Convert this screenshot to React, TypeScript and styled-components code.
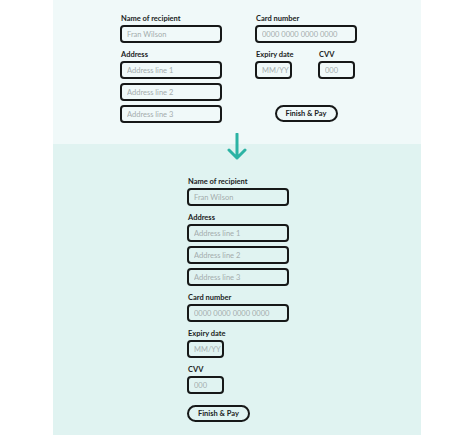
import React from "react";
import styled, { createGlobalStyle } from "styled-components";

const GlobalStyle = createGlobalStyle`
  html, body {
    margin: 0;
    padding: 0;
    background: #ffffff;
    font-family: "Lato", "Liberation Sans", sans-serif;
  }
`;

interface FieldProps {
  label: string;
  placeholders: string[];
  width?: number;
}

/**
 * Label with one or more stacked inputs
 */
const Field = (props: FieldProps) => {
  return (
    <StyledField>
      <StyledLabel>{props.label}</StyledLabel>
      <StyledInputStack>
        {props.placeholders.map((p) => (
          <StyledInput key={p} placeholder={p} $width={props.width} readOnly />
        ))}
      </StyledInputStack>
    </StyledField>
  );
};

const ArrowDown = () => (
  <StyledArrow width="20" height="28" viewBox="0 0 20 28">
    <path
      d="M10 1 V25 M2 17 L10 25 L18 17"
      fill="none"
      stroke="#2cb3a4"
      strokeWidth="3"
      strokeLinecap="round"
      strokeLinejoin="round"
    />
  </StyledArrow>
);

const App = () => {
  return (
    <>
      <GlobalStyle />
      <StyledPanel>
        {/* Start wide layout */}
        <StyledWide>
          <StyledColumn>
            <Field label="Name of recipient" placeholders={["Fran Wilson"]} />
            <Field
              label="Address"
              placeholders={["Address line 1", "Address line 2", "Address line 3"]}
            />
          </StyledColumn>
          <StyledColumn>
            <Field label="Card number" placeholders={["0000 0000 0000 0000"]} />
            <StyledPair>
              <Field label="Expiry date" placeholders={["MM/YY"]} width={37} />
              <Field label="CVV" placeholders={["000"]} width={37} />
            </StyledPair>
            <StyledCentered>
              <StyledButton>Finish &amp; Pay</StyledButton>
            </StyledCentered>
          </StyledColumn>
        </StyledWide>
        {/* End wide layout */}

        <ArrowDown />

        {/* Start narrow layout */}
        <StyledNarrow>
          <Field label="Name of recipient" placeholders={["Fran Wilson"]} />
          <Field
            label="Address"
            placeholders={["Address line 1", "Address line 2", "Address line 3"]}
          />
          <Field label="Card number" placeholders={["0000 0000 0000 0000"]} />
          <Field label="Expiry date" placeholders={["MM/YY"]} width={37} />
          <Field label="CVV" placeholders={["000"]} width={37} />
          <StyledButton $spaced>Finish &amp; Pay</StyledButton>
        </StyledNarrow>
        {/* End narrow layout */}
      </StyledPanel>
    </>
  );
};

export default App;

// ========= Start Styled Elements ==========
const StyledPanel = styled.div`
  position: relative;
  width: 368px;
  margin-left: 53px;
`;

const StyledWide = styled.div`
  height: 144px;
  box-sizing: border-box;
  padding: 14px 0 0 67px;
  background: #f0f9f9;
  display: grid;
  grid-template-columns: 102px 102px;
  column-gap: 33px;
  align-items: start;
`;

const StyledColumn = styled.div`
  display: flex;
  flex-direction: column;
  gap: 7px;
`;

const StyledPair = styled.div`
  display: grid;
  grid-template-columns: 63px 37px;
`;

const StyledCentered = styled.div`
  display: flex;
  justify-content: center;
  margin-top: 19px;
`;

const StyledNarrow = styled.div`
  height: 291px;
  box-sizing: border-box;
  padding: 33px 0 0 134px;
  background: #e0f3f1;
  display: flex;
  flex-direction: column;
  align-items: flex-start;
  gap: 7px;
`;

const StyledField = styled.div`
  display: flex;
  flex-direction: column;
`;

const StyledLabel = styled.div`
  height: 11px;
  font-size: 7.5px;
  font-weight: 700;
  color: #1b1d1d;
  line-height: 9px;
  padding-left: 1px;
  white-space: nowrap;
`;

const StyledInputStack = styled.div`
  display: flex;
  flex-direction: column;
  gap: 4px;
`;

const StyledInput = styled.input<{ $width?: number }>`
  box-sizing: border-box;
  width: ${(p) => p.$width ?? 102}px;
  height: 18px;
  margin: 0;
  padding: 0 0 0 5px;
  border: 2px solid #161818;
  border-radius: 4px;
  background: transparent;
  font-family: "Lato", "Liberation Sans", sans-serif;
  font-size: 7.5px;
  outline: none;

  &::placeholder {
    color: #a4adad;
  }
`;

const StyledButton = styled.button<{ $spaced?: boolean }>`
  box-sizing: border-box;
  width: 63px;
  height: 17px;
  margin: ${(p) => (p.$spaced ? "4px 0 0" : "0")};
  padding: 0;
  border: 2px solid #161818;
  border-radius: 9px;
  background: transparent;
  font-family: "Lato", "Liberation Sans", sans-serif;
  font-size: 7.5px;
  font-weight: 700;
  color: #1b1d1d;
`;

const StyledArrow = styled.svg`
  position: absolute;
  top: 133px;
  left: 174px;
`;
// ========= End Styled Elements ==========
